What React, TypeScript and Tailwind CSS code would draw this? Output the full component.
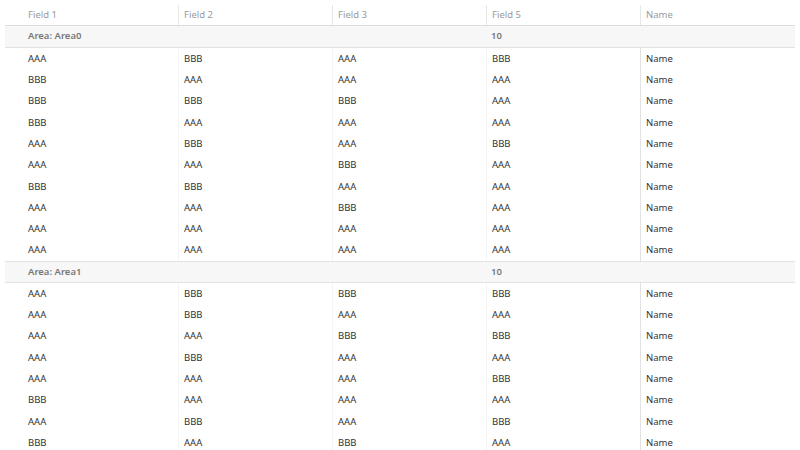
import React from 'react';

type Row = [string, string, string, string, string];

const groups: { area: string; total: string; rows: Row[] }[] = [
  {
    area: 'Area0',
    total: '10',
    rows: [
      ['AAA', 'BBB', 'AAA', 'BBB', 'Name'],
      ['BBB', 'AAA', 'AAA', 'AAA', 'Name'],
      ['BBB', 'BBB', 'BBB', 'AAA', 'Name'],
      ['BBB', 'AAA', 'AAA', 'AAA', 'Name'],
      ['AAA', 'BBB', 'AAA', 'BBB', 'Name'],
      ['AAA', 'AAA', 'BBB', 'AAA', 'Name'],
      ['BBB', 'BBB', 'AAA', 'AAA', 'Name'],
      ['AAA', 'AAA', 'BBB', 'AAA', 'Name'],
      ['AAA', 'AAA', 'AAA', 'AAA', 'Name'],
      ['AAA', 'AAA', 'AAA', 'AAA', 'Name'],
    ],
  },
  {
    area: 'Area1',
    total: '10',
    rows: [
      ['AAA', 'BBB', 'BBB', 'BBB', 'Name'],
      ['AAA', 'BBB', 'AAA', 'AAA', 'Name'],
      ['AAA', 'AAA', 'BBB', 'BBB', 'Name'],
      ['AAA', 'BBB', 'AAA', 'AAA', 'Name'],
      ['AAA', 'AAA', 'AAA', 'BBB', 'Name'],
      ['BBB', 'AAA', 'AAA', 'AAA', 'Name'],
      ['AAA', 'BBB', 'AAA', 'BBB', 'Name'],
      ['BBB', 'AAA', 'BBB', 'AAA', 'Name'],
    ],
  },
];

const headers = ['Field 1', 'Field 2', 'Field 3', 'Field 5', 'Name'];

// expand column + 5 data columns
const cols = 'grid grid-cols-[18px_155px_154px_154px_154px_155px]';

const App = () => {
  return (
    <div
      className="h-[450px] w-[800px] overflow-hidden bg-white pt-[5px] pl-[5px] text-[9.5px]"
      style={{ fontFamily: '"Noto Sans", "Open Sans", sans-serif' }}
    >
      <div className="w-[790px]">
        {/* header */}
        <div className={`${cols} h-[21px] border-b border-[#dcdcdc] text-[#9a9a9a]`}>
          <div />
          {headers.map((h, i) => (
            <div
              key={h}
              className={`flex items-center px-[5px] ${i > 0 ? 'border-l border-[#e6e6e6]' : ''}`}
            >
              {h}
            </div>
          ))}
        </div>

        {groups.map((g, gi) => (
          <div key={g.area}>
            <div
              className={`${cols} h-[22px] border-b border-[#e2e2e2] bg-[#f7f7f7] font-semibold text-[#777] ${
                gi > 0 ? 'border-t' : ''
              }`}
            >
              <div />
              <div className="col-span-3 flex items-center px-[5px]">Area: {g.area}</div>
              <div className="flex items-center px-[5px]">{g.total}</div>
              <div />
            </div>
            {g.rows.map((r, ri) => (
              <div key={ri} className={`${cols} h-[21.33px] text-[#333]`}>
                <div />
                {r.map((c, ci) => (
                  <div
                    key={ci}
                    className={`flex items-center px-[5px] ${
                      ci === 4
                        ? 'border-l border-[#e2e2e2]'
                        : ci > 0
                        ? 'border-l border-[#f4f4f4]'
                        : ''
                    }`}
                  >
                    {c}
                  </div>
                ))}
              </div>
            ))}
          </div>
        ))}
      </div>
    </div>
  );
};

export default App;
